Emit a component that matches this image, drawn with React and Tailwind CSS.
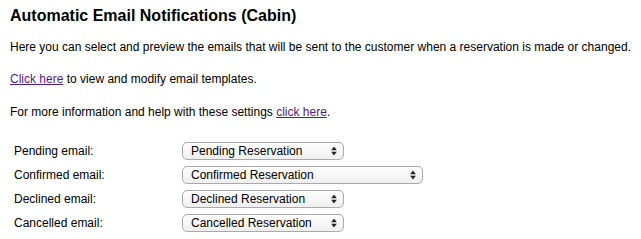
import React from "react";

function Sel({ label, width }) {
  return (
    <div
      className="flex items-center justify-between h-[18px] rounded-[5px] border border-[#a9a9a9] bg-gradient-to-b from-[#ffffff] to-[#efefef] pl-[8px] pr-[6px] text-[12px] text-black"
      style={{ width }}
    >
      <span className="leading-none">{label}</span>
      <svg width="6" height="10" viewBox="0 0 6 10">
        <path d="M3 0.5 L5.8 4.2 L0.2 4.2 Z" fill="#222" />
        <path d="M3 9.5 L5.8 5.8 L0.2 5.8 Z" fill="#222" />
      </svg>
    </div>
  );
}

export default function App() {
  const rows = [
    ["Pending email:", "Pending Reservation", 162],
    ["Confirmed email:", "Confirmed Reservation", 241],
    ["Declined email:", "Declined Reservation", 162],
    ["Cancelled email:", "Cancelled Reservation", 162],
  ];
  return (
    <div className="w-[641px] h-[239px] overflow-hidden bg-white text-black px-[10px] pt-[6px]" style={{ fontFamily: '"Liberation Sans", Arial, sans-serif' }}>
      <h1 className="text-[16px] font-bold leading-[20px]">Automatic Email Notifications (Cabin)</h1>
      <p className="text-[12px] leading-[14px] mt-[14px] whitespace-nowrap">
        Here you can select and preview the emails that will be sent to the customer when a reservation is made or changed.
      </p>
      <p className="text-[12px] leading-[14px] mt-[18px]">
        <span className="underline text-[#551a8b]">Click here</span> to view and modify email templates.
      </p>
      <p className="text-[12px] leading-[14px] mt-[19px]">
        For more information and help with these settings <span className="underline text-[#551a8b]">click here</span>.
      </p>
      <div className="mt-[23px] flex flex-col gap-[6px] pl-[4px]">
        {rows.map(([l, s, w]) => (
          <div key={l} className="flex items-center">
            <div className="w-[168px] text-[12px] leading-[14px]">{l}</div>
            <Sel label={s} width={w} />
          </div>
        ))}
      </div>
    </div>
  );
}
